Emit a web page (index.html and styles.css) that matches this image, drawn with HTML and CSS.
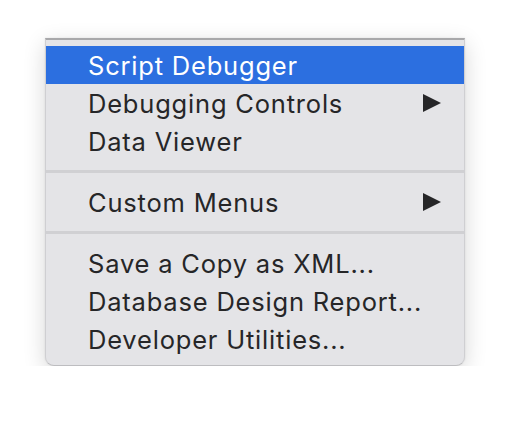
FILE: index.html
```html
<!DOCTYPE html>
<html>
<head>
<meta charset="utf-8">
<link rel="stylesheet" href="styles.css">
</head>
<body>
<div class="menu">
  <div class="item active">Script Debugger</div>
  <div class="item">Debugging Controls<span class="arrow"></span></div>
  <div class="item">Data Viewer</div>
  <div class="sep"></div>
  <div class="item">Custom Menus<span class="arrow"></span></div>
  <div class="sep"></div>
  <div class="item">Save a Copy as XML...</div>
  <div class="item">Database Design Report...</div>
  <div class="item">Developer Utilities...</div>
</div>
</body>
</html>
```
FILE: styles.css
```css
html, body {
  margin: 0;
  background: #ffffff;
}
body {
  padding: 38px 0 0 45px;
  font-family: Inter, "Noto Sans", sans-serif;
}
.menu {
  width: 420px;
  box-sizing: border-box;
  background: #e4e4e7;
  border-top: 2px solid #a8a8aa;
  border-left: 1px solid #cfcfd2;
  border-right: 1px solid #cfcfd2;
  border-bottom: 1px solid #bdbdc0;
  border-radius: 0 0 9px 9px;
  padding: 6px 0 7px;
  box-shadow: 0 6px 22px rgba(0, 0, 0, 0.16), 0 0 2px rgba(0, 0, 0, 0.1);
}
.item {
  height: 38px;
  display: flex;
  align-items: center;
  justify-content: space-between;
  padding: 0 23px 0 42px;
  font-size: 25.5px;
  color: #262628;
  letter-spacing: 0.8px;
}
.item.active {
  background: #2c6fe0;
  color: #ffffff;
}
.arrow {
  width: 0;
  height: 0;
  border-top: 9.5px solid transparent;
  border-bottom: 9.5px solid transparent;
  border-left: 18px solid #262628;
}
.sep {
  height: 3px;
  background: #d0d0d3;
  margin: 10px 0;
}
```
